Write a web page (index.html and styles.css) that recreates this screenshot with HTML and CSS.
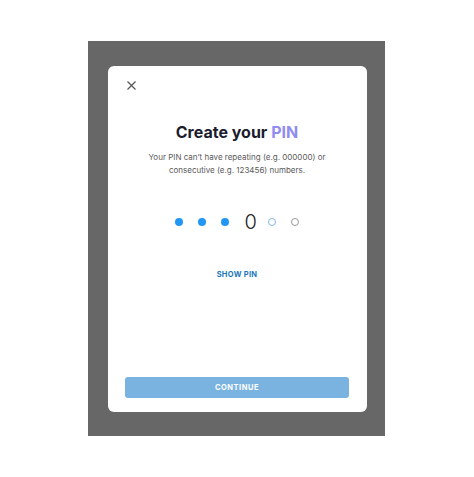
FILE: index.html
```html
<!DOCTYPE html>
<html>
<head>
<meta charset="utf-8">
<link rel="stylesheet" href="styles.css">
</head>
<body>
<div class="page">
  <div class="backdrop">
    <div class="card">
      <div class="close">
        <svg width="9" height="9" viewBox="0 0 9 9"><path d="M0.5 0.5 L8.5 8.5 M8.5 0.5 L0.5 8.5" stroke="#555" stroke-width="1.2" fill="none"/></svg>
      </div>
      <h1 class="title">Create your <span class="accent">PIN</span></h1>
      <p class="subtitle">Your PIN can’t have repeating (e.g. 000000) or<br>consecutive (e.g. 123456) numbers.</p>
      <div class="pins">
        <span class="dot filled"></span>
        <span class="dot filled"></span>
        <span class="dot filled"></span>
        <span class="digit">0</span>
        <span class="dot next"></span>
        <span class="dot empty"></span>
      </div>
      <div class="show">SHOW PIN</div>
      <button class="continue">CONTINUE</button>
    </div>
  </div>
</div>
</body>
</html>
```
FILE: styles.css
```css
html, body {
  margin: 0;
  padding: 0;
  background: #fff;
}
.page {
  padding: 41px 0 0 88px;
}
.backdrop {
  width: 297px;
  height: 395px;
  box-sizing: border-box;
  background: #676767;
  padding: 25px 18px 24px 20px;
  display: flex;
}
.card {
  flex: 1;
  background: #fff;
  border-radius: 6px;
  padding: 15px 18px 14px 17px;
  display: flex;
  flex-direction: column;
  font-family: "Inter", "Liberation Sans", sans-serif;
}
.close {
  margin-left: 2px;
  width: 9px;
  height: 9px;
  display: flex;
}
.title {
  margin: 31px 0 0;
  font-size: 16px;
  line-height: 22px;
  font-weight: 700;
  text-align: center;
  color: #1b1c2e;
  letter-spacing: 0;
}
.accent {
  color: #8f8df0;
}
.subtitle {
  margin: 8px 0 0;
  font-size: 8px;
  line-height: 13px;
  text-align: center;
  color: #5a5a5a;
}
.pins {
  margin-top: 35px;
  height: 20px;
  display: flex;
  justify-content: center;
  align-items: center;
  gap: 15.2px;
}
.dot {
  width: 8px;
  height: 8px;
  border-radius: 50%;
  box-sizing: border-box;
}
.dot.filled {
  background: #2196f3;
}
.dot.next {
  border: 1px solid #7fb7e6;
}
.dot.empty {
  border: 1px solid #999;
}
.digit {
  width: 8px;
  text-align: center;
  font-size: 20px;
  line-height: 20px;
  font-weight: 300;
  color: #222;
}
.show {
  margin-top: 37px;
  text-align: center;
  font-size: 7.5px;
  line-height: 12px;
  font-weight: 700;
  color: #1b76bc;
  letter-spacing: 0.3px;
}
.continue {
  margin-top: auto;
  height: 21px;
  border: none;
  border-radius: 3px;
  background: #7ab3e0;
  color: #fff;
  font-family: "Inter", "Liberation Sans", sans-serif;
  font-size: 7.5px;
  font-weight: 700;
  letter-spacing: 0.5px;
  padding: 0;
}
```
